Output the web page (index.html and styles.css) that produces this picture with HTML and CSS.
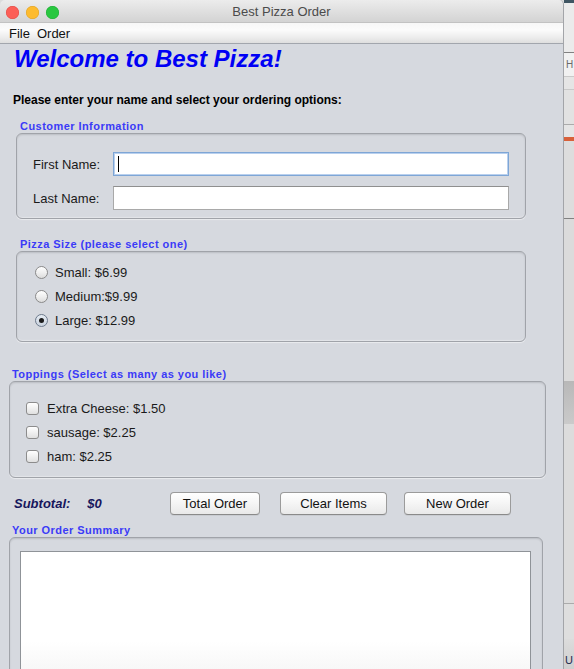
FILE: index.html
```html
<!DOCTYPE html>
<html lang="en">
<head>
<meta charset="utf-8">
<title>Best Pizza Order</title>
<link rel="stylesheet" href="styles.css">
</head>
<body>
<div class="screen">
  <div class="window">
    <div class="titlebar">
      <div class="lights">
        <span class="light red"></span>
        <span class="light yellow"></span>
        <span class="light green"></span>
      </div>
      <div class="title">Best Pizza Order</div>
      <div class="spacer"></div>
    </div>
    <div class="menubar">
      <span class="menu-item">File</span>
      <span class="menu-item">Order</span>
    </div>
    <div class="content">
      <h1 class="welcome">Welcome to Best Pizza!</h1>
      <p class="prompt">Please enter your name and select your ordering options:</p>

      <section class="group group-customer">
        <div class="group-label">Customer Information</div>
        <div class="group-box customer-box">
          <div class="field-row">
            <span class="field-label">First Name:</span>
            <div class="text-input focused"><span class="caret"></span></div>
          </div>
          <div class="field-row">
            <span class="field-label">Last Name:</span>
            <div class="text-input"></div>
          </div>
        </div>
      </section>

      <section class="group group-size">
        <div class="group-label">Pizza Size (please select one)</div>
        <div class="group-box size-box">
          <div class="option-row"><span class="radio"></span><span class="option-text">Small: $6.99</span></div>
          <div class="option-row"><span class="radio"></span><span class="option-text">Medium:$9.99</span></div>
          <div class="option-row"><span class="radio checked"></span><span class="option-text">Large: $12.99</span></div>
        </div>
      </section>

      <section class="group group-toppings">
        <div class="group-label">Toppings (Select as many as you like)</div>
        <div class="group-box toppings-box">
          <div class="option-row"><span class="checkbox"></span><span class="option-text">Extra Cheese: $1.50</span></div>
          <div class="option-row"><span class="checkbox"></span><span class="option-text">sausage: $2.25</span></div>
          <div class="option-row"><span class="checkbox"></span><span class="option-text">ham: $2.25</span></div>
        </div>
      </section>

      <div class="action-row">
        <div class="subtotal">
          <span class="subtotal-label">Subtotal:</span>
          <span class="subtotal-value">$0</span>
        </div>
        <button class="btn btn-total">Total Order</button>
        <button class="btn btn-clear">Clear Items</button>
        <button class="btn btn-new">New Order</button>
      </div>

      <section class="group group-summary">
        <div class="group-label">Your Order Summary</div>
        <div class="group-box summary-box">
          <div class="summary-area"></div>
        </div>
      </section>
    </div>
  </div>

  <div class="backdrop">
    <div class="bd bd-top"></div>
    <div class="bd bd-light1"></div>
    <div class="bd bd-line dark"></div>
    <div class="bd bd-h"><span class="bd-glyph">H</span></div>
    <div class="bd bd-line soft"></div>
    <div class="bd bd-seg12"></div>
    <div class="bd bd-line soft"></div>
    <div class="bd bd-seg34"></div>
    <div class="bd bd-line mid"></div>
    <div class="bd bd-seg12"></div>
    <div class="bd bd-orange"></div>
    <div class="bd bd-seg78"></div>
    <div class="bd bd-line dark"></div>
    <div class="bd bd-seg162"></div>
    <div class="bd bd-block"></div>
    <div class="bd bd-seg179"></div>
    <div class="bd bd-line mid"></div>
    <div class="bd bd-seg35"></div>
    <div class="bd bd-bottom"><span class="bd-glyph bd-u">U</span></div>
  </div>
</div>
</body>
</html>
```

FILE: styles.css
```css
* { box-sizing: border-box; }

html, body {
  margin: 0;
  padding: 0;
}

body {
  background: #dcdcdc;
  font-family: "Liberation Sans", Arial, sans-serif;
  color: #111;
}

.screen {
  display: flex;
  width: 574px;
  height: 669px;
  overflow: hidden;
}

/* ---------- window ---------- */
.window {
  flex: none;
  width: 564px;
  height: 669px;
  background: #d6d9df;
  border-right: 1px solid #a3a5a9;
  border-top-right-radius: 5px;
  border-top-left-radius: 5px;
  overflow: hidden;
  display: flex;
  flex-direction: column;
}

.titlebar {
  flex: none;
  height: 22px;
  display: grid;
  grid-template-columns: 1fr auto 1fr;
  align-items: center;
  background: linear-gradient(#ececec, #d3d3d3);
}

.lights {
  display: flex;
  gap: 7px;
  padding-left: 6px;
  padding-top: 2px;
}

.light {
  width: 13px;
  height: 13px;
  border-radius: 50%;
  display: block;
}
.light.red { background: #fc5f57; box-shadow: inset 0 0 0 0.5px #de4a43; }
.light.yellow { background: #fdbb2e; box-shadow: inset 0 0 0 0.5px #dea024; }
.light.green { background: #29c740; box-shadow: inset 0 0 0 0.5px #1eaa33; }

.title {
  font-size: 13px;
  color: #4b4b4b;
  padding-top: 1px;
}

.menubar {
  flex: none;
  height: 22px;
  display: flex;
  align-items: center;
  gap: 7px;
  padding-left: 9px;
  padding-top: 1px;
  font-size: 13px;
  color: #111;
  background: linear-gradient(#f7f7f7, #fbfbfb 35%, #ebebeb 75%, #dedede);
  border-top: 1px solid #c2c2c2;
  border-bottom: 1px solid #a2a6ad;
}

/* ---------- content ---------- */
.content {
  flex: 1;
  padding-top: 1px;
}

.welcome {
  margin: 0;
  padding-left: 14px;
  font-size: 24px;
  line-height: 28px;
  font-weight: bold;
  font-style: italic;
  color: #0000f5;
}

.prompt {
  margin: 20px 0 0 13px;
  font-size: 12px;
  line-height: 15px;
  font-weight: bold;
  color: #000;
}

.group-label {
  font-size: 11px;
  line-height: 13px;
  font-weight: bold;
  letter-spacing: 0.45px;
  color: #3b3bf7;
}

.group-box {
  border: 1px solid #a0a3a9;
  border-radius: 6px;
  box-shadow: inset 0 1px 2px rgba(0, 0, 0, 0.13), inset 0 -1px 1px rgba(255, 255, 255, 0.35), 0 1px 1px rgba(255, 255, 255, 0.5);
}

/* customer */
.group-customer {
  margin: 12px 0 0 16px;
  width: 510px;
}
.group-customer .group-label { padding-left: 4px; }

.customer-box {
  padding: 18px 16px 8px 16px;
  display: flex;
  flex-direction: column;
  gap: 10px;
}

.field-row {
  display: flex;
  align-items: center;
  height: 24px;
}

.field-label {
  width: 80px;
  flex: none;
  font-size: 13px;
  color: #1a1a1a;
}

.text-input {
  flex: 1;
  height: 24px;
  background: #fff;
  border: 1px solid #a9a9a9;
  border-top-color: #8f8f8f;
  display: flex;
  align-items: center;
  padding-left: 4px;
}

.text-input.focused {
  border: 1px solid #7ea6d6;
  box-shadow: inset 0 0 0 1px #b9d0ee;
}

.caret {
  width: 1px;
  height: 16px;
  background: #000;
}

/* size */
.group-size {
  margin: 19px 0 0 16px;
  width: 510px;
}
.group-size .group-label { padding-left: 4px; }

.size-box {
  padding: 8px 18px 9px 18px;
}

.option-row {
  display: flex;
  align-items: center;
  height: 24px;
}

.option-text {
  font-size: 13px;
  color: #1a1a1a;
}

.radio {
  flex: none;
  width: 13px;
  height: 13px;
  border-radius: 50%;
  border: 1px solid #8a8a8a;
  background: linear-gradient(#ffffff, #ececec 60%, #dcdcdc);
  margin-right: 7px;
  display: flex;
  align-items: center;
  justify-content: center;
}

.radio.checked {
  border-color: #6d7a8c;
  background: linear-gradient(#e6ecf3, #c9d2de);
}
.radio.checked::after {
  content: "";
  width: 5px;
  height: 5px;
  border-radius: 50%;
  background: #1b1b1b;
}

/* toppings */
.group-toppings {
  margin: 26px 0 0 9px;
  width: 537px;
}
.group-toppings .group-label { padding-left: 3px; }

.toppings-box {
  padding: 14px 16px 9px 16px;
}

.checkbox {
  flex: none;
  width: 13px;
  height: 13px;
  border-radius: 3px;
  border: 1px solid #8c8c8c;
  background: linear-gradient(#ffffff, #ededed 60%, #e0e0e0);
  margin-right: 8px;
}

/* actions */
.action-row {
  margin: 14px 0 0 14px;
  height: 23px;
  display: flex;
  align-items: center;
}

.subtotal {
  width: 156px;
  flex: none;
  display: flex;
  gap: 17px;
  font-size: 13px;
  font-weight: bold;
  font-style: italic;
  color: #16165c;
}

.btn {
  flex: none;
  height: 23px;
  padding: 0;
  font-family: "Liberation Sans", Arial, sans-serif;
  font-size: 13px;
  color: #111;
  border: 1px solid #9b9b9b;
  border-bottom-color: #8a8a8a;
  border-radius: 4px;
  background: linear-gradient(#ffffff, #f6f6f6 45%, #e9e9e9);
  box-shadow: 0 1px 0 rgba(0, 0, 0, 0.06);
}

.btn-total { width: 90px; }
.btn-clear { width: 107px; margin-left: 20px; }
.btn-new { width: 107px; margin-left: 17px; }

/* summary */
.group-summary {
  margin: 9px 0 0 9px;
  width: 534px;
}
.group-summary .group-label { padding-left: 3px; }

.summary-box {
  padding: 13px 11px 0 10px;
  height: 200px;
}

.summary-area {
  height: 200px;
  background: linear-gradient(#ffffff, #ffffff 45%, #f7f7f7 60%, #f1f1f1);
  border: 1px solid #8f9398;
}

/* ---------- backdrop strip (window behind) ---------- */
.backdrop {
  flex: 1;
  display: flex;
  flex-direction: column;
  background: #dcdcdc;
  overflow: hidden;
}

.bd { flex: none; }
.bd-top { height: 3px; background: #3f5663; }
.bd-light1 { height: 49px; background: #ebebeb; }
.bd-line { height: 1px; }
.bd-line.dark { background: #818181; }
.bd-line.mid { background: #ababab; }
.bd-line.soft { background: #c9c9c9; }
.bd-h {
  height: 23px;
  background: #f1f1f1;
  display: flex;
  align-items: center;
  font-size: 10px;
  color: #6a6a6a;
  padding-left: 2px;
}
.bd-seg12 { height: 12px; background: #e5e5e5; }
.bd-seg34 { height: 34px; background: #e2e2e2; }
.bd-orange { height: 4px; background: #d8603a; }
.bd-seg78 { height: 77px; background: #dddddd; }
.bd-seg162 { height: 162px; background: #dbdbdb; }
.bd-block { height: 43px; background: linear-gradient(#b8b8b8, #cacaca); }
.bd-seg179 { height: 179px; background: #dcdcdc; }
.bd-seg35 { height: 35px; background: #dedede; }
.bd-bottom {
  height: 30px;
  background: linear-gradient(#dcdcdc, #cfcfcf);
  display: flex;
  align-items: flex-end;
  font-size: 11px;
  color: #1f2a4d;
  padding-left: 1px;
  padding-bottom: 3px;
}
.bd-glyph { line-height: 1; }
```
